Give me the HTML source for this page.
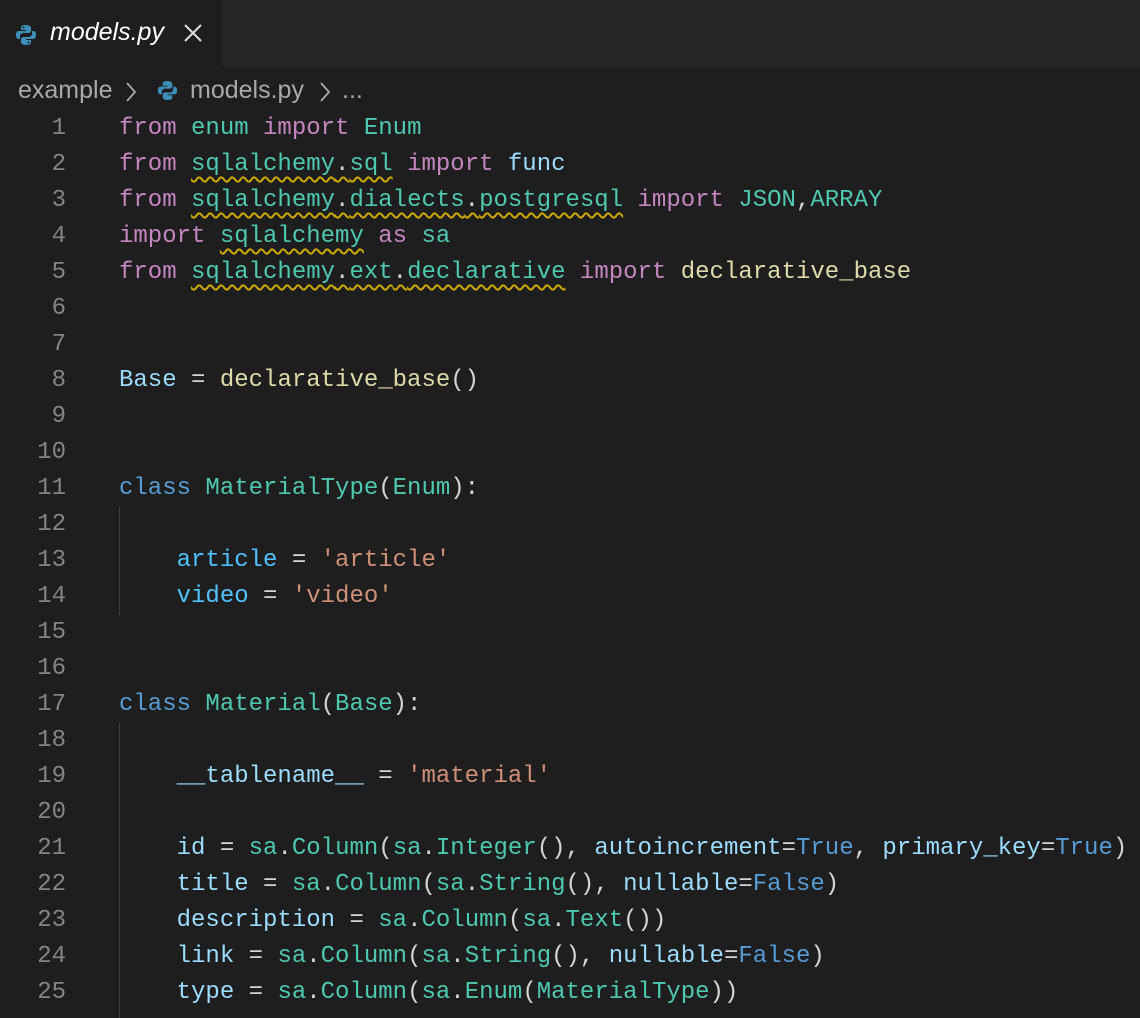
<html><head><style>
body{margin:0;width:1140px;height:1018px;background:#1e1e1e;overflow:hidden;font-family:"Liberation Sans",sans-serif}
.tabbar{position:absolute;left:0;top:0;width:1140px;height:67px;background:#252526}
.tab{position:absolute;left:0;top:0;width:222px;height:67px;background:#1e1e1e}
.tab .t{position:absolute;left:50px;top:18px;color:#fff;font-style:italic;font-size:25px}
.x{position:absolute;left:183px;top:23px}
.bc{position:absolute;top:76px;color:#a9a9a9;font-size:25px;white-space:pre}
.code{position:absolute;left:0;top:111px;font-family:"Liberation Mono",monospace;font-size:24px;line-height:36px;color:#d4d4d4;white-space:pre}
.ln{position:absolute;left:0;top:0;width:66px;text-align:right;color:#858585}
.c{position:absolute;left:119px;top:0}
.k{color:#c586c0}.m{color:#4ec9b0}.v{color:#9cdcfe}.f{color:#dcdcaa}.s{color:#ce9178}.b{color:#569cd6}.p{color:#4fc1ff}
.w{text-decoration:underline wavy #cca700;text-underline-offset:6px;text-decoration-thickness:1.5px}
.g{position:absolute;left:119px;width:1px;background:#404040}
</style></head><body>
<div class="tabbar"><div class="tab">
<svg style="position:absolute;left:15px;top:24px" width="22" height="22" viewBox="0 0 22 22"><path d="M10.5 1C6 1 6 3 6 4v2h5v1H3.5C1.5 7 1 9 1 11s.5 4 2.5 4H5v-2.5C5 10.5 6.5 9 8.5 9h5c1.5 0 2.5-1 2.5-2.5V4c0-1.5-1.5-3-5.5-3z" fill="#3d8fb8"/><path d="M11.5 21c4.5 0 4.5-2 4.5-3v-2h-5v-1h7.5c2 0 2.5-2 2.5-4s-.5-4-2.5-4H17v2.5c0 2-1.5 3.5-3.5 3.5h-5C7 13 6 14 6 15.5V18c0 1.5 1.5 3 5.5 3z" fill="#3d8fb8"/><circle cx="8.5" cy="3.5" r="1" fill="#1e1e1e"/><circle cx="13.5" cy="18.5" r="1" fill="#1e1e1e"/></svg>
<div class="t">models.py</div>
<svg class="x" width="20" height="20" viewBox="0 0 20 20"><path d="M2 2L18 18M18 2L2 18" stroke="#ddd" stroke-width="2"/></svg>
</div></div>
<div class="bc" style="left:18px">example</div>
<svg style="position:absolute;left:124px;top:81px" width="14" height="22" viewBox="0 0 14 22"><path d="M3 2L11 11L3 20" stroke="#a9a9a9" stroke-width="1.8" fill="none"/></svg>
<svg style="position:absolute;left:157px;top:80px" width="21" height="21" viewBox="0 0 22 22"><path d="M10.5 1C6 1 6 3 6 4v2h5v1H3.5C1.5 7 1 9 1 11s.5 4 2.5 4H5v-2.5C5 10.5 6.5 9 8.5 9h5c1.5 0 2.5-1 2.5-2.5V4c0-1.5-1.5-3-5.5-3z" fill="#3d8fb8"/><path d="M11.5 21c4.5 0 4.5-2 4.5-3v-2h-5v-1h7.5c2 0 2.5-2 2.5-4s-.5-4-2.5-4H17v2.5c0 2-1.5 3.5-3.5 3.5h-5C7 13 6 14 6 15.5V18c0 1.5 1.5 3 5.5 3z" fill="#3d8fb8"/></svg>
<div class="bc" style="left:190px">models.py</div>
<svg style="position:absolute;left:318px;top:81px" width="14" height="22" viewBox="0 0 14 22"><path d="M3 2L11 11L3 20" stroke="#a9a9a9" stroke-width="1.8" fill="none"/></svg>
<div class="bc" style="left:342px">...</div>
<div class="g" style="top:507px;height:108px"></div>
<div class="g" style="top:723px;height:295px"></div>
<div class="code"><div class="ln">1
2
3
4
5
6
7
8
9
10
11
12
13
14
15
16
17
18
19
20
21
22
23
24
25</div><div class="c"><span class="k">from</span> <span class="m">enum</span> <span class="k">import</span> <span class="m">Enum</span>
<span class="k">from</span> <span class="w"><span class="m">sqlalchemy</span>.<span class="m">sql</span></span> <span class="k">import</span> <span class="v">func</span>
<span class="k">from</span> <span class="w"><span class="m">sqlalchemy</span>.<span class="m">dialects</span>.<span class="m">postgresql</span></span> <span class="k">import</span> <span class="m">JSON</span>,<span class="m">ARRAY</span>
<span class="k">import</span> <span class="w m">sqlalchemy</span> <span class="k">as</span> <span class="m">sa</span>
<span class="k">from</span> <span class="w"><span class="m">sqlalchemy</span>.<span class="m">ext</span>.<span class="m">declarative</span></span> <span class="k">import</span> <span class="f">declarative_base</span>


<span class="v">Base</span> = <span class="f">declarative_base</span>()


<span class="b">class</span> <span class="m">MaterialType</span>(<span class="m">Enum</span>):

    <span class="p">article</span> = <span class="s">'article'</span>
    <span class="p">video</span> = <span class="s">'video'</span>


<span class="b">class</span> <span class="m">Material</span>(<span class="m">Base</span>):

    <span class="v">__tablename__</span> = <span class="s">'material'</span>

    <span class="v">id</span> = <span class="m">sa</span>.<span class="m">Column</span>(<span class="m">sa</span>.<span class="m">Integer</span>(), <span class="v">autoincrement</span>=<span class="b">True</span>, <span class="v">primary_key</span>=<span class="b">True</span>)
    <span class="v">title</span> = <span class="m">sa</span>.<span class="m">Column</span>(<span class="m">sa</span>.<span class="m">String</span>(), <span class="v">nullable</span>=<span class="b">False</span>)
    <span class="v">description</span> = <span class="m">sa</span>.<span class="m">Column</span>(<span class="m">sa</span>.<span class="m">Text</span>())
    <span class="v">link</span> = <span class="m">sa</span>.<span class="m">Column</span>(<span class="m">sa</span>.<span class="m">String</span>(), <span class="v">nullable</span>=<span class="b">False</span>)
    <span class="v">type</span> = <span class="m">sa</span>.<span class="m">Column</span>(<span class="m">sa</span>.<span class="m">Enum</span>(<span class="m">MaterialType</span>))</div></div>
</body></html>
